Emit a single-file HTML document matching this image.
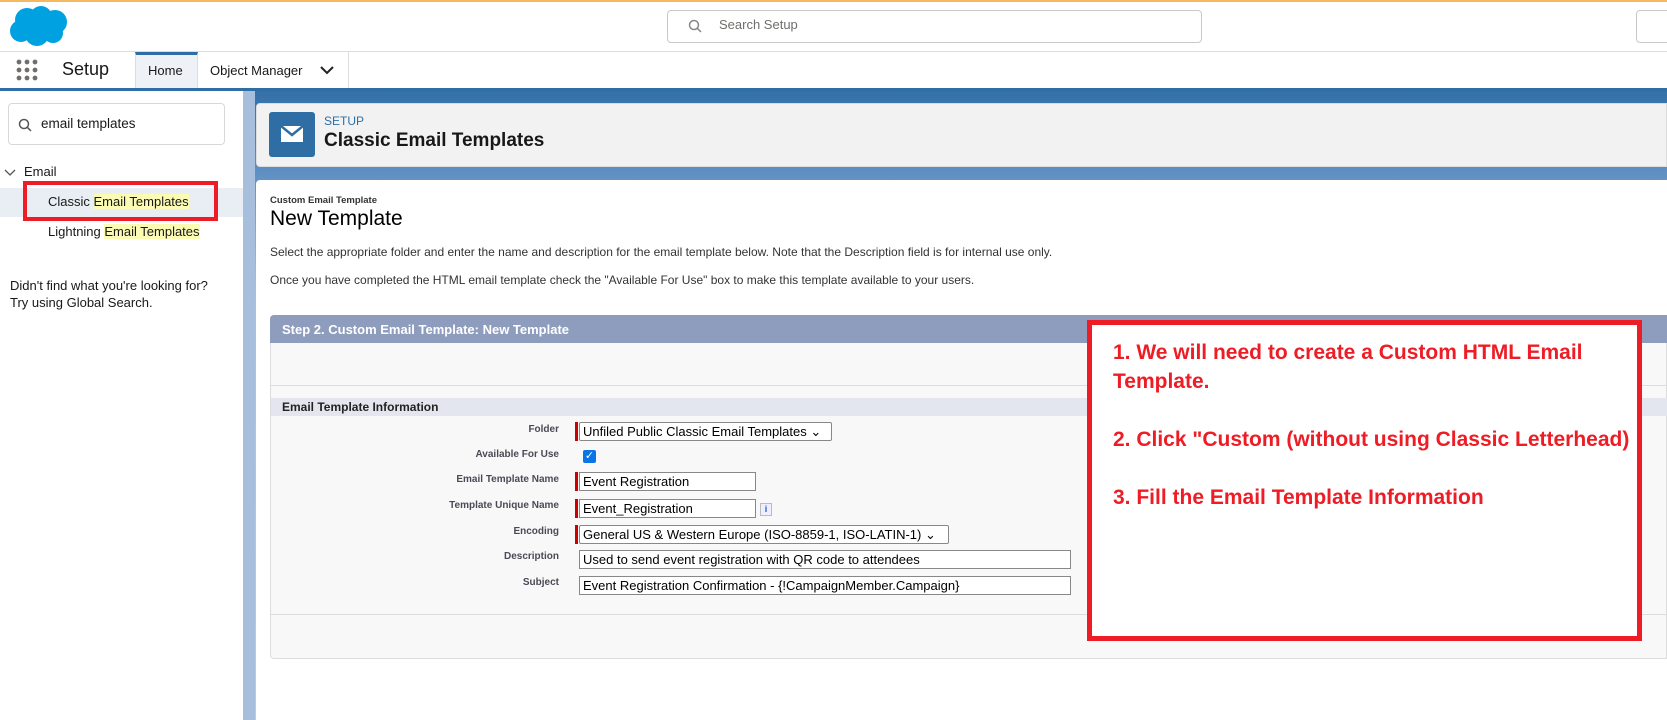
<!DOCTYPE html>
<html><head><meta charset="utf-8"><style>
*{box-sizing:border-box;margin:0;padding:0}
body{width:1667px;height:720px;overflow:hidden;font-family:"Liberation Sans",Arial,sans-serif;background:#fff;position:relative;color:#181818}
.a{position:absolute}
.lbl{position:absolute;right:1108px;font-size:10px;font-weight:bold;color:#4a4a56;text-align:right;width:200px}
.inp{position:absolute;height:19px;border:1px solid #888;background:#fff;font-size:13px;line-height:17px;padding-left:3px;color:#000;white-space:nowrap;overflow:hidden}
.req{position:absolute;width:3px;height:19px;background:#c00}
.rt{font-weight:bold;color:#ee1c25;font-size:21px;position:absolute;left:1113px;white-space:nowrap}
</style></head><body>
<div class="a" style="left:0;top:0;width:1667px;height:2px;background:#f4b860"></div>
<svg class="a" style="left:9px;top:5px" width="60" height="42" viewBox="0 0 60 42"><g fill="#00a1e0"><circle cx="18" cy="15" r="12"/><circle cx="32" cy="12" r="11"/><circle cx="46" cy="17" r="12"/><circle cx="12" cy="26" r="11"/><circle cx="28" cy="29" r="12"/><circle cx="44" cy="28" r="10"/></g></svg>
<div class="a" style="left:667px;top:10px;width:535px;height:33px;border:1px solid #c9c9c9;border-radius:4px"></div>
<svg class="a" style="left:688px;top:19px" width="14" height="14" viewBox="0 0 14 14"><circle cx="6" cy="6" r="4.5" fill="none" stroke="#888" stroke-width="1.5"/><line x1="9.3" y1="9.3" x2="13" y2="13" stroke="#888" stroke-width="1.5"/></svg>
<div class="a" style="left:719px;top:17px;font-size:13px;color:#706e6b">Search Setup</div>
<div class="a" style="left:1636px;top:10px;width:40px;height:33px;border:1px solid #c9c9c9;border-radius:4px"></div>
<div class="a" style="left:0;top:51px;width:1667px;height:1px;background:#ddd"></div>
<svg class="a" style="left:16px;top:59px" width="22" height="22"><g fill="#706e6b"><circle cx="3" cy="3" r="2.4"/><circle cx="11" cy="3" r="2.4"/><circle cx="19" cy="3" r="2.4"/><circle cx="3" cy="11" r="2.4"/><circle cx="11" cy="11" r="2.4"/><circle cx="19" cy="11" r="2.4"/><circle cx="3" cy="19" r="2.4"/><circle cx="11" cy="19" r="2.4"/><circle cx="19" cy="19" r="2.4"/></g></svg>
<div class="a" style="left:62px;top:59px;font-size:18px">Setup</div>
<div class="a" style="left:135px;top:52px;width:63px;height:36px;background:#eef2f6;border-top:3px solid #2e6ea5;border-left:1px solid #ddd;border-right:1px solid #ddd"></div>
<div class="a" style="left:148px;top:63px;font-size:13px">Home</div>
<div class="a" style="left:210px;top:63px;font-size:13px">Object Manager</div>
<svg class="a" style="left:320px;top:66px" width="14" height="9"><path d="M1 1 L7 7 L13 1" fill="none" stroke="#222" stroke-width="2"/></svg>
<div class="a" style="left:348px;top:52px;width:1px;height:36px;background:#ddd"></div>
<div class="a" style="left:0;top:88px;width:1667px;height:3px;background:#2e6ea5"></div>
<div class="a" style="left:243px;top:91px;width:1424px;height:629px;background:linear-gradient(#3470a8 0,#5e8fc2 80px,#a9c0dd 200px,#b7cbe4 100%)"></div>
<div class="a" style="left:243px;top:91px;width:12px;height:629px;background:#a7bedc"></div>
<div class="a" style="left:0;top:91px;width:243px;height:629px;background:#fff"></div>
<div class="a" style="left:8px;top:103px;width:217px;height:42px;border:1px solid #d8d8d8;border-radius:4px"></div>
<svg class="a" style="left:18px;top:118px" width="14" height="14" viewBox="0 0 14 14"><circle cx="6" cy="6" r="4.5" fill="none" stroke="#555" stroke-width="1.5"/><line x1="9.3" y1="9.3" x2="13" y2="13" stroke="#555" stroke-width="1.5"/></svg>
<div class="a" style="left:41px;top:116px;font-size:13.5px">email templates</div>
<svg class="a" style="left:4px;top:169px" width="12" height="8"><path d="M1 1 L6 6 L11 1" fill="none" stroke="#555" stroke-width="1.3"/></svg>
<div class="a" style="left:24px;top:164px;font-size:13px">Email</div>
<div class="a" style="left:0;top:188px;width:243px;height:29px;background:#e8eef3"></div>
<div class="a" style="left:48px;top:194px;font-size:13px">Classic <span style="background:#fbfbb4">Email Templates</span></div>
<div class="a" style="left:23px;top:181px;width:195px;height:40px;border:4px solid #ee1c25"></div>
<div class="a" style="left:48px;top:224px;font-size:13px">Lightning <span style="background:#fbfbb4">Email Templates</span></div>
<div class="a" style="left:10px;top:277px;font-size:13px;line-height:17px">Didn't find what you're looking for?<br>Try using Global Search.</div>
<div class="a" style="left:256px;top:103px;width:1411px;height:64px;background:#f2f2f2;border-radius:4px 0 0 4px;border:1px solid #ddd"></div>
<div class="a" style="left:269px;top:112px;width:46px;height:45px;background:#2e6ea5;border-radius:3px"></div>
<svg class="a" style="left:281px;top:126px" width="22" height="16"><rect x="0" y="0" width="22" height="16" fill="#fff"/><path d="M0 0 L11 9 L22 0" fill="none" stroke="#2e6ea5" stroke-width="2.5"/></svg>
<div class="a" style="left:324px;top:114px;font-size:12px;color:#2e6ea5">SETUP</div>
<div class="a" style="left:324px;top:130px;font-size:19px;font-weight:bold;color:#181818">Classic Email Templates</div>
<div class="a" style="left:256px;top:180px;width:1411px;height:540px;background:#fff;border-radius:4px 0 0 0"></div>
<div class="a" style="left:270px;top:195px;font-size:9.5px;font-weight:bold;color:#333">Custom Email Template</div>
<div class="a" style="left:270px;top:207px;font-size:21px;color:#000">New Template</div>
<div class="a" style="left:270px;top:245px;font-size:12px;color:#333">Select the appropriate folder and enter the name and description for the email template below. Note that the Description field is for internal use only.</div>
<div class="a" style="left:270px;top:273px;font-size:12px;color:#333">Once you have completed the HTML email template check the "Available For Use" box to make this template available to your users.</div>
<div class="a" style="left:270px;top:315px;width:1397px;height:344px;background:#f8f8f8;border:1px solid #ddd;border-radius:4px 0 0 4px"></div>
<div class="a" style="left:270px;top:315px;width:1397px;height:28px;background:#8e9dbd;border-radius:4px 0 0 0"></div>
<div class="a" style="left:282px;top:322px;font-size:13px;font-weight:bold;color:#fff">Step 2. Custom Email Template: New Template</div>
<div class="a" style="left:271px;top:385px;width:1396px;height:1px;background:#ddd"></div>
<div class="a" style="left:271px;top:398px;width:1396px;height:18px;background:#e3e6ef"></div>
<div class="a" style="left:282px;top:400px;font-size:12px;font-weight:bold;color:#222">Email Template Information</div>
<div class="lbl" style="top:424px">Folder</div>
<div class="lbl" style="top:449px">Available For Use</div>
<div class="lbl" style="top:474px">Email Template Name</div>
<div class="lbl" style="top:500px">Template Unique Name</div>
<div class="lbl" style="top:526px">Encoding</div>
<div class="lbl" style="top:551px">Description</div>
<div class="lbl" style="top:577px">Subject</div>
<div class="req" style="left:575px;top:422px"></div>
<div class="inp" style="left:579px;top:422px;width:253px;border-radius:2px">Unfiled Public Classic Email Templates ⌄</div>
<div class="a" style="left:583px;top:450px;width:13px;height:13px;background:#0a75e6;border-radius:2px;color:#fff;font-size:11px;line-height:13px;text-align:center">✓</div>
<div class="req" style="left:575px;top:472px"></div>
<div class="inp" style="left:579px;top:472px;width:177px">Event Registration</div>
<div class="req" style="left:575px;top:499px"></div>
<div class="inp" style="left:579px;top:499px;width:177px">Event_Registration</div>
<div class="a" style="left:760px;top:503px;width:12px;height:13px;border:1px solid #bbb;background:#eef;font-size:9px;color:#2060c0;text-align:center;line-height:11px;font-weight:bold">i</div>
<div class="req" style="left:575px;top:525px"></div>
<div class="inp" style="left:579px;top:525px;width:370px;border-radius:2px">General US &amp; Western Europe (ISO-8859-1, ISO-LATIN-1) ⌄</div>
<div class="inp" style="left:579px;top:550px;width:492px">Used to send event registration with QR code to attendees</div>
<div class="inp" style="left:579px;top:576px;width:492px">Event Registration Confirmation - {!CampaignMember.Campaign}</div>
<div class="a" style="left:271px;top:614px;width:1396px;height:1px;background:#ddd"></div>
<div class="a" style="left:1087px;top:320px;width:555px;height:321px;background:#fff;border:5px solid #ee1c25"></div>
<div class="rt" style="top:341px">1. We will need to create a Custom HTML Email</div>
<div class="rt" style="top:370px">Template.</div>
<div class="rt" style="top:428px">2. Click "Custom (without using Classic Letterhead)</div>
<div class="rt" style="top:486px">3. Fill the Email Template Information</div>
</body></html>
